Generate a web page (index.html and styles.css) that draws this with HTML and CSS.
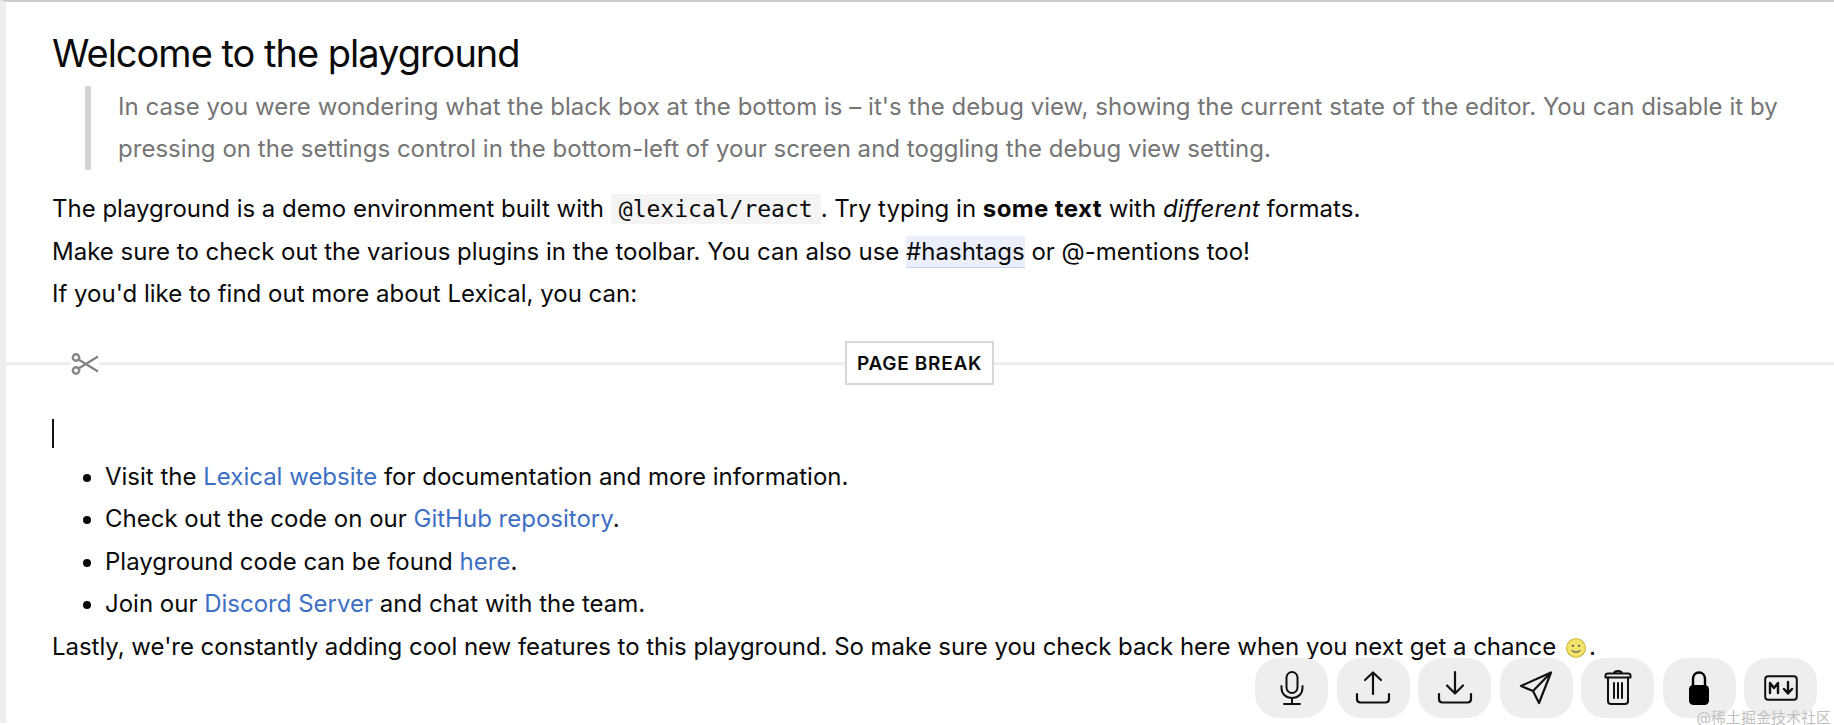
FILE: index.html
```html
<!DOCTYPE html>
<html lang="en">
<head>
    <meta charset="UTF-8">
    <title>Lexical Playground</title>
    <link rel="stylesheet" href="styles.css">
</head>
<body>
    <div class="editor">
        <h1>Welcome to the playground</h1>
        <blockquote>In case you were wondering what the black box at the bottom is – it's the debug view, showing the current state of the editor. You can disable it by pressing on the settings control in the bottom-left of your screen and toggling the debug view setting.</blockquote>
        <p>The playground is a demo environment built with <code>@lexical/react</code>. Try typing in <b>some text</b> with <i>different</i> formats.</p>
        <p>Make sure to check out the various plugins in the toolbar. You can also use <span class="hashtag">#hashtags</span> or @-mentions too!</p>
        <p>If you'd like to find out more about Lexical, you can:</p>

        <div class="page-break">
            <svg class="scissors" width="28" height="24" viewBox="0 0 28 24" fill="none" stroke="#858585" stroke-width="2.400">
                <circle cx="5" cy="5.500" r="3.200"/>
                <circle cx="5" cy="18.500" r="3.200"/>
                <path d="M7.500 7.500 L27 19.500 M7.500 16.500 L27 4.500"/>
            </svg>
            <span class="page-break-label">PAGE BREAK</span>
        </div>

        <div class="caret-line"><span class="caret"></span></div>

        <ul>
            <li>Visit the <a href="#">Lexical website</a> for documentation and more information.</li>
            <li>Check out the code on our <a href="#">GitHub repository</a>.</li>
            <li>Playground code can be found <a href="#">here</a>.</li>
            <li>Join our <a href="#">Discord Server</a> and chat with the team.</li>
        </ul>
        <p class="closing">Lastly, we're constantly adding cool new features to this playground. So make sure you check back here when you next get a chance <svg class="emoji" width="22" height="22" viewBox="0 0 20 20"><circle cx="10" cy="10" r="8.600" fill="#f3e36a" stroke="#c9b84a"/><circle cx="7.200" cy="8" r="1" fill="#555"/><circle cx="12.800" cy="8" r="1" fill="#555"/><path d="M6 12.200 Q10 15.400 14 12.200" fill="none" stroke="#555" stroke-width="1"/></svg>.</p>

        <div class="actions">
            <button>
                <svg width="32" height="36" viewBox="0 0 32 36" fill="none" stroke="#111" stroke-width="2" stroke-linecap="round">
                    <rect x="10.500" y="2" width="11" height="21" rx="5.500"/>
                    <path d="M5.500 16 V18 C5.500 24 10 28 16 28 C22 28 26.500 24 26.500 18 V16 M16 28 V34 M8 34 H24"/>
                </svg>
            </button>
            <button>
                <svg width="36" height="36" viewBox="0 0 36 36" fill="none" stroke="#111" stroke-width="2.200" stroke-linecap="round" stroke-linejoin="round">
                    <path d="M18 24 V3 M10 10 L18 2.500 L26 10 M2 24 V29 C2 31.500 3 32.500 5.500 32.500 H30.500 C33 32.500 34 31.500 34 29 V24"/>
                </svg>
            </button>
            <button>
                <svg width="36" height="36" viewBox="0 0 36 36" fill="none" stroke="#111" stroke-width="2.200" stroke-linecap="round" stroke-linejoin="round">
                    <path d="M18 2 V23 M10 15.500 L18 23.500 L26 15.500 M2 24 V29 C2 31.500 3 32.500 5.500 32.500 H30.500 C33 32.500 34 31.500 34 29 V24"/>
                </svg>
            </button>
            <button>
                <svg width="34" height="34" viewBox="0 0 34 34" fill="none" stroke="#111" stroke-width="2.200" stroke-linecap="round" stroke-linejoin="round">
                    <path d="M32 1.500 L2 15 L14 20 L20 32 Z M32 1.500 L14 20"/>
                </svg>
            </button>
            <button>
                <svg width="28" height="36" viewBox="0 0 28 36" fill="none" stroke="#111" stroke-width="2" stroke-linecap="round" stroke-linejoin="round">
                    <path d="M1.500 5.500 C1.500 4 2.500 3.500 4 3.500 H24 C25.500 3.500 26.500 4 26.500 5.500 V7.500 H1.500 Z M10 3.500 C10 1.500 11 1 14 1 C17 1 18 1.500 18 3.500"/>
                    <path d="M4 7.500 V31 C4 33 5 34 7 34 H21 C23 34 24 33 24 31 V7.500 M10 13 V28 M14 13 V28 M18 13 V28"/>
                </svg>
            </button>
            <button>
                <svg width="22" height="36" viewBox="0 0 22 36">
                    <path d="M5 17 V9 C5 5 7.500 2.500 11 2.500 C14.500 2.500 17 5 17 9 V17" fill="none" stroke="#000" stroke-width="2.400"/>
                    <rect x="1" y="15" width="20" height="20" rx="4.500" fill="#000"/>
                </svg>
            </button>
            <button>
                <svg width="34" height="26" viewBox="0 0 34 26" fill="none" stroke="#111" stroke-linecap="round" stroke-linejoin="round">
                    <rect x="1.200" y="1.200" width="31.600" height="23.600" rx="3" stroke-width="2"/>
                    <path d="M6 18 V8 L10 13 L14 8 V18 M24 7 V18 M20 14 L24 18.500 L28 14" stroke-width="2.400"/>
                </svg>
            </button>
        </div>
    </div>
    <span class="watermark">@稀土掘金技术社区</span>
</body>
</html>
```

FILE: styles.css
```css
html, body {
    margin: 0;
    height: 100%;
}
body {
    position: relative;
    font-family: Inter, "Noto Sans CJK SC", sans-serif;
    color: #0a0a0a;
    background: #fff;
    overflow: hidden;
}
.editor {
    height: 723px;
    box-sizing: border-box;
    border-top: 2px solid #ccc;
    border-left: 6px solid #eee;
    padding: 26px 17px 0 46px;
}
h1 {
    margin: 0 0 8px;
    font-size: 38px;
    font-weight: 400;
    line-height: 50px;
    letter-spacing: -1px;
}
blockquote {
    margin: 0 0 18px 33px;
    padding-left: 27px;
    border-left: 6px solid #d4d4d4;
    color: #757575;
    font-size: 24px;
    letter-spacing: 0.03px;
    line-height: 42px;
}
p {
    margin: 0;
    font-size: 24px;
    line-height: 42.500px;
}
b {
    letter-spacing: 0.4px;
}
i {
    letter-spacing: 0.2px;
}
code {
    padding: 2px 8px;
    background: #f4f4f4;
    font-family: "DejaVu Sans Mono", monospace;
    font-size: 23px;
}
.hashtag {
    padding: 1px 0;
    background: #eaeffb;
    border-bottom: 1px solid #c8d2f0;
}
.page-break {
    position: relative;
    height: 44px;
    margin: 25px -17px 0 -46px;
}
.page-break::before {
    content: "";
    position: absolute;
    left: 0;
    right: 0;
    top: 21px;
    border-top: 3px solid #eee;
}
.scissors {
    position: absolute;
    left: 65px;
    top: 11px;
    background: #fff;
}
.page-break-label {
    position: absolute;
    left: 839px;
    top: 0;
    width: 149px;
    height: 44px;
    box-sizing: border-box;
    border: 2px solid #d8d8d8;
    background: #fff;
    font-size: 19px;
    font-weight: 600;
    letter-spacing: 0.7px;
    line-height: 41px;
    text-align: center;
}
.caret-line {
    height: 43px;
    margin-top: 27px;
    margin-bottom: 1px;
    display: flex;
    align-items: center;
}
.caret {
    width: 2px;
    height: 29px;
    background: #111;
}
ul {
    margin: 0;
    padding-left: 53px;
    font-size: 24px;
    line-height: 42.500px;
}
a {
    color: #3d6fc4;
    text-decoration: none;
}
.closing {
    letter-spacing: -0.03px;
}
.emoji {
    vertical-align: -4px;
    margin: 0 2px;
}
.actions {
    display: flex;
    justify-content: flex-end;
    gap: 8.500px;
    margin-top: -10px;
}
.actions button {
    width: 73px;
    height: 60px;
    padding: 0;
    border: 0;
    border-radius: 24px;
    background: #eee;
    display: flex;
    align-items: center;
    justify-content: center;
}
.watermark {
    position: absolute;
    right: 3px;
    bottom: -2px;
    color: #c0c0c0;
    font-size: 15px;
    line-height: 18px;
    white-space: nowrap;
}
```
